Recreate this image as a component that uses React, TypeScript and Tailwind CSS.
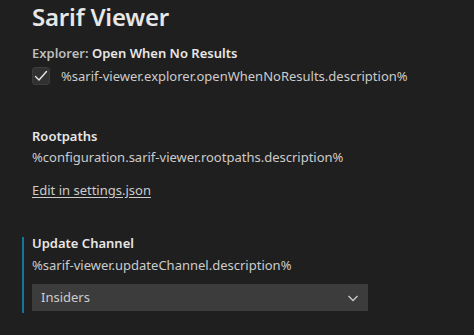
import React from "react";

const font = { fontFamily: '"Noto Sans", "Open Sans", sans-serif' };

export default function App() {
  return (
    <div className="w-[474px] h-[335px] bg-[#1f1f1f] overflow-hidden text-[#cccccc]" style={font}>
      <div className="pl-[32px]">
        <div className="text-[24px] leading-[34px] font-semibold tracking-[-0.2px] text-[#e7e7e7]">Sarif Viewer</div>
      </div>
      <div className="pl-[32px] mt-[10px]">
        <div className="text-[13px] leading-[18px] font-semibold">
          <span className="text-[#bdbdbd]">Explorer: </span>
          <span className="text-[#e7e7e7]">Open When No Results</span>
        </div>
        <div className="flex items-center mt-[5px] gap-[11px]">
          <div className="w-[18px] h-[18px] rounded-[3px] bg-[#313131] border border-[#3c3c3c] flex items-center justify-center">
            <svg width="16" height="16" viewBox="0 0 16 16" fill="none">
              <path d="M2.5 8.5 L6 12 L13.5 3.5" stroke="#e7e7e7" strokeWidth="1.4" strokeLinecap="round" strokeLinejoin="round" />
            </svg>
          </div>
          <div className="text-[13px] leading-[18px] text-[#cccccc]">%sarif-viewer.explorer.openWhenNoResults.description%</div>
        </div>
      </div>
      <div className="pl-[32px] mt-[42px]">
        <div className="text-[13px] leading-[18px] font-semibold text-[#e7e7e7]">Rootpaths</div>
        <div className="text-[13px] leading-[18px] mt-[3px] text-[#cccccc]">%configuration.sarif-viewer.rootpaths.description%</div>
        <div className="text-[13px] leading-[18px] mt-[15px] text-[#cccccc] underline underline-offset-2">Edit in settings.json</div>
      </div>
      <div className="mt-[35px] ml-[22px] flex">
        <div className="w-[2px] mt-[3px] bg-[#14749a]" />
        <div className="pl-[8px] pb-[2px]">
          <div className="text-[13px] leading-[18px] font-semibold text-[#e7e7e7]">Update Channel</div>
          <div className="text-[13px] leading-[18px] mt-[4px] text-[#cccccc]">%sarif-viewer.updateChannel.description%</div>
          <div className="mt-[10px] w-[336px] h-[27px] bg-[#3c3c3c] flex items-center justify-between pl-[9px] pr-[7px]">
            <span className="text-[13px] text-[#cccccc]">Insiders</span>
            <svg width="16" height="16" viewBox="0 0 16 16" fill="none">
              <path d="M3.5 6 L8 10.5 L12.5 6" stroke="#cccccc" strokeWidth="1.3" />
            </svg>
          </div>
        </div>
      </div>
    </div>
  );
}
